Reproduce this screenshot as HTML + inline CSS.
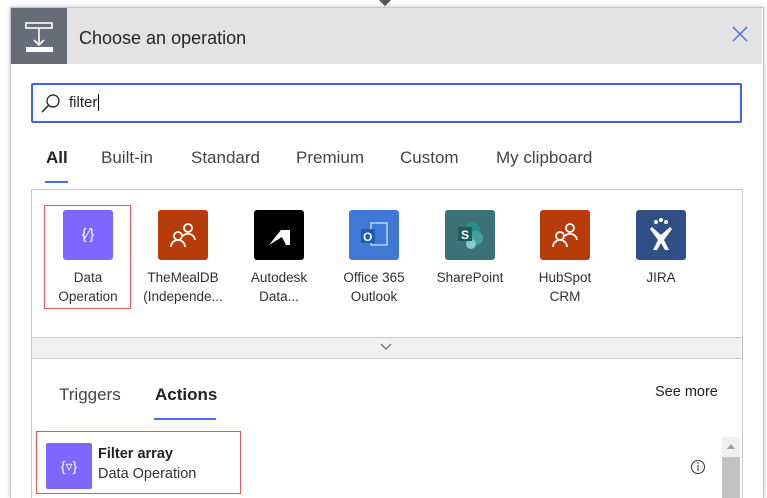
<!DOCTYPE html>
<html><head><style>
html,body{margin:0;width:767px;height:498px;overflow:hidden}
body{background:#fff;font-family:"Liberation Sans",sans-serif;position:relative;color:#323130}
.a{position:absolute}
.panel{left:10px;top:7px;width:752px;height:490px;border:1px solid #c8c8c8;border-bottom:none;box-shadow:0 0 4px rgba(0,0,0,.25);background:#fff}
.ic{position:absolute;top:210px;width:50px;height:50px;border-radius:3px}
.lb{position:absolute;top:268px;width:96px;text-align:center;font-size:13.5px;line-height:19px;color:#323130}
.tab{position:absolute;top:148px;font-size:17px;color:#444}
</style></head><body>
<div class="a" style="left:380px;top:-6px;width:10px;height:10px;background:#555;transform:rotate(45deg)"></div>
<div class="a panel"></div>
<div class="a" style="left:11px;top:8px;width:751px;height:56px;background:#e3e3e3"></div>
<div class="a" style="left:11px;top:8px;width:56px;height:56px;background:#676c78">
<svg width="56" height="56"><g stroke="#fff" fill="none" stroke-width="1.6"><rect x="15" y="15" width="26" height="5"/><line x1="28" y1="20" x2="28" y2="37"/><polyline points="23,32 28,37 33,32"/></g><rect x="15" y="39" width="27" height="5" fill="#fff"/></svg></div>
<div class="a" style="left:79px;top:28px;font-size:18px;color:#252423">Choose an operation</div>
<svg class="a" style="left:731px;top:25px" width="18" height="18"><g stroke="#4a6cf0" stroke-width="1.4"><line x1="2" y1="2" x2="16" y2="16"/><line x1="16" y1="2" x2="2" y2="16"/></g></svg>
<div class="a" style="left:31px;top:83px;width:707px;height:36px;border:2px solid #3d62f2;border-radius:2px"></div>
<svg class="a" style="left:40px;top:93px" width="22" height="22"><circle cx="13" cy="8" r="6" stroke="#333" fill="none" stroke-width="1.4"/><line x1="9" y1="12" x2="2" y2="19" stroke="#333" stroke-width="1.6"/></svg>
<div class="a" style="left:69px;top:94px;font-size:15px;color:#222">filter<span style="border-left:1px solid #000;margin-left:1px"></span></div>
<div class="tab" style="left:46px;color:#222;font-weight:bold">All</div>
<div class="tab" style="left:101px">Built-in</div>
<div class="tab" style="left:191px">Standard</div>
<div class="tab" style="left:296px">Premium</div>
<div class="tab" style="left:400px">Custom</div>
<div class="tab" style="left:496px">My clipboard</div>
<div class="a" style="left:45px;top:181px;width:23px;height:2px;background:#4a6cf0"></div>
<div class="a" style="left:31px;top:189px;width:710px;height:309px;border:1px solid #c8c8c8;border-bottom:none"></div>
<div class="a" style="left:32px;top:337px;width:709px;height:20px;background:#f0f0f0;border-top:1px solid #c8c8c8;border-bottom:1px solid #c8c8c8"></div>
<svg class="a" style="left:380px;top:343px" width="12" height="8"><polyline points="1,1 6,6 11,1" stroke="#555" fill="none"/></svg>
<div class="a" style="left:44px;top:205px;width:85px;height:102px;border:1px solid #e05a5a"></div>
<div class="ic" style="left:63px;background:#7f66ff"><div style="color:#fff;font-size:15px;text-align:center;line-height:50px">{∕}</div></div>
<div class="ic" style="left:158px;background:#b83c0a"><svg width="50" height="50" fill="none" stroke="#fff" stroke-width="1.8"><circle cx="20" cy="26" r="4"/><path d="M13 37a7 7 0 0 1 14 0"/><circle cx="30" cy="18" r="4"/><path d="M25 26a7 7 0 0 1 12 4"/></svg></div>
<div class="ic" style="left:254px;background:#000"><svg width="50" height="50"><path d="M15 35 L27 20 H36 V35 H32 L28 27 Z" fill="#fff"/></svg></div>
<div class="ic" style="left:349px;background:#3f79d6"><svg width="50" height="50"><rect x="22" y="13" width="16" height="22" fill="none" stroke="#cfe0ff" stroke-width="1.3"/><rect x="12" y="19" width="14" height="14" fill="#1f5bb8"/><text x="14" y="31" fill="#fff" font-size="12" font-family="Liberation Sans" font-weight="bold">O</text></svg></div>
<div class="ic" style="left:445px;background:#3b7275"><svg width="50" height="50"><circle cx="27" cy="20" r="8" fill="#2e8b8a"/><circle cx="31" cy="28" r="7" fill="#44a1a0"/><circle cx="26" cy="34" r="5" fill="#7ccfcd"/><rect x="13" y="17" width="14" height="14" fill="#1f5a5c"/><text x="16" y="29" fill="#fff" font-size="12" font-family="Liberation Sans" font-weight="bold">S</text></svg></div>
<div class="ic" style="left:540px;background:#b83c0a"><svg width="50" height="50" fill="none" stroke="#fff" stroke-width="1.8"><circle cx="20" cy="26" r="4"/><path d="M13 37a7 7 0 0 1 14 0"/><circle cx="30" cy="18" r="4"/><path d="M25 26a7 7 0 0 1 12 4"/></svg></div>
<div class="ic" style="left:636px;background:#2f4f86"><svg width="50" height="50" fill="#fff"><circle cx="20" cy="12" r="2"/><circle cx="25" cy="10" r="2"/><circle cx="30" cy="12" r="2"/><path d="M16 17 L25 25 L34 17 L36 19 L28 30 L33 40 L29 40 L25 33 L21 40 L17 40 L22 30 L14 19Z"/></svg></div>
<div class="lb" style="left:40px">Data<br>Operation</div>
<div class="lb" style="left:135px">TheMealDB<br>(Independe...</div>
<div class="lb" style="left:231px">Autodesk<br>Data...</div>
<div class="lb" style="left:326px">Office 365<br>Outlook</div>
<div class="lb" style="left:422px">SharePoint</div>
<div class="lb" style="left:517px">HubSpot<br>CRM</div>
<div class="lb" style="left:613px">JIRA</div>
<div class="a" style="left:59px;top:385px;font-size:17px;color:#444">Triggers</div>
<div class="a" style="left:155px;top:385px;font-size:17px;color:#222;font-weight:bold">Actions</div>
<div class="a" style="left:154px;top:418px;width:62px;height:2px;background:#4a6cf0"></div>
<div class="a" style="left:655px;top:384px;font-size:14.5px;color:#222">See more</div>
<div class="a" style="left:36px;top:431px;width:203px;height:61px;border:1px solid #e05a5a"></div>
<div class="a" style="left:46px;top:443px;width:46px;height:46px;background:#7f66ff;border-radius:2px;color:#fff;text-align:center;line-height:46px;font-size:14px">{▿}</div>
<div class="a" style="left:98px;top:446px;font-size:14.5px;font-weight:bold;color:#222">Filter array</div>
<div class="a" style="left:98px;top:466px;font-size:14.5px;color:#333">Data Operation</div>
<svg class="a" style="left:690px;top:459px" width="16" height="16"><circle cx="8" cy="8" r="6.5" stroke="#333" fill="none"/><line x1="8" y1="6" x2="8" y2="12" stroke="#333"/><circle cx="8" cy="4" r="0.8" fill="#333"/></svg>
<div class="a" style="left:722px;top:437px;width:18px;height:61px;background:#f0f0f0"></div>
<div class="a" style="left:722px;top:457px;width:18px;height:41px;background:#c2c2c2"></div>
<svg class="a" style="left:726px;top:442px" width="10" height="8"><polygon points="1,7 5,2 9,7" fill="#a0a0a0"/></svg>
</body></html>
